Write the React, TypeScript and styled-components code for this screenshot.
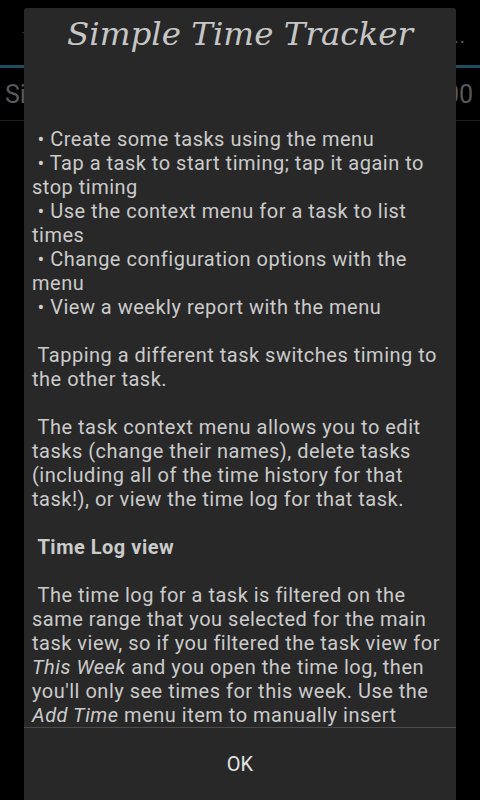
import React from "react";
import styled, { createGlobalStyle } from "styled-components";

const GlobalStyle = createGlobalStyle`
  html, body {
    margin: 0;
    padding: 0;
    background: #000;
    font-family: "Roboto", "Liberation Sans", sans-serif;
  }
`;

const Screen = styled.div`
  position: relative;
  width: 480px;
  height: 800px;
  overflow: hidden;
  background: #000;
`;

const ActionBar = styled.div`
  height: 65px;
  display: flex;
  align-items: center;
  justify-content: space-between;
  padding: 0 14px 0 22px;
  color: #555;
  font-size: 20px;
`;

const ActionTitle = styled.span`
  font-size: 6px;
`;

const Overflow = styled.span`
  font-size: 20px;
  letter-spacing: 1px;
  padding-top: 6px;
`;

const TabLine = styled.div`
  height: 3px;
  background: #1b4d5c;
`;

const TaskRow = styled.div`
  height: 52px;
  display: flex;
  align-items: center;
  justify-content: space-between;
  padding: 0 7px 0 5px;
  border-bottom: 1px solid #1e1e1e;
  color: #5a5a5a;
  font-size: 25px;
`;

const Dialog = styled.div`
  position: absolute;
  left: 24px;
  top: 8px;
  width: 432px;
  height: 800px;
  background: #282828;
  border-radius: 3px;
  display: flex;
  flex-direction: column;
`;

const Title = styled.h1`
  margin: 0;
  height: 52px;
  display: flex;
  align-items: center;
  justify-content: center;
  font-family: "DejaVu Serif", "Liberation Serif", serif;
  font-style: italic;
  font-weight: normal;
  font-size: 32.5px;
  color: #c6c6c6;
`;

const Body = styled.div`
  flex: 1;
  overflow: hidden;
  padding: 67px 10px 0 8px;
  white-space: pre-wrap;
  font-size: 20px;
  letter-spacing: 0.5px;
  line-height: 24px;
  color: #cbcbcb;
`;

const Divider = styled.div`
  height: 1px;
  background: #4a4a4a;
`;

const ButtonBar = styled.div`
  height: 72px;
  flex: 0 0 72px;
  display: flex;
  align-items: center;
  justify-content: center;
  margin-bottom: 8px;
`;

const OkButton = styled.button`
  background: none;
  border: none;
  font-family: "Roboto", "Liberation Sans", sans-serif;
  font-size: 20px;
  color: #e2e2e2;
  padding: 0 24px;
`;

export default function App() {
  return (
    <Screen>
      <GlobalStyle />
      <ActionBar>
        <ActionTitle>•</ActionTitle>
        <Overflow>..</Overflow>
      </ActionBar>
      <TabLine />
      <TaskRow>
        <span>Simple Task</span>
        <span>0:00</span>
      </TaskRow>
      <Dialog>
        <Title>Simple Time Tracker</Title>
        <Body>
          {" • Create some tasks using the menu\n • Tap a task to start timing; tap it again to stop timing\n • Use the context menu for a task to list times\n • Change configuration options with the menu\n • View a weekly report with the menu\n\n Tapping a different task switches timing to the other task.\n\n The task context menu allows you to edit tasks (change their names), delete tasks (including all of the time history for that task!), or view the time log for that task.\n\n "}
          <b>Time Log view</b>
          {"\n\n The time log for a task is filtered on the same range that you selected for the main task view, so if you filtered the task view for "}
          <i>This Week</i>
          {" and you open the time log, then you'll only see times for this week. Use the "}
          <i>Add Time</i>
          {" menu item to manually insert times into the log."}
        </Body>
        <Divider />
        <ButtonBar>
          <OkButton>OK</OkButton>
        </ButtonBar>
      </Dialog>
    </Screen>
  );
}
